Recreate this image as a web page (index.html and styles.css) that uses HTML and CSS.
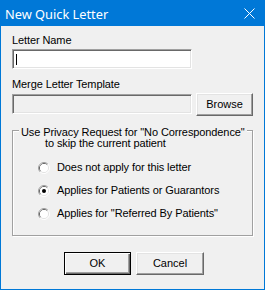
FILE: index.html
```html
<!DOCTYPE html>
<html>
<head>
<meta charset="utf-8">
<link rel="stylesheet" href="styles.css">
</head>
<body>
<div class="window">
  <div class="titlebar">
    <span class="title">New Quick Letter</span>
    <svg class="close" width="11" height="11" viewBox="0 0 11 11"><path d="M0.5 0.5 L10.5 10.5 M10.5 0.5 L0.5 10.5" stroke="#fff" stroke-width="1" fill="none"/></svg>
  </div>
  <div class="client">
    <label class="lbl">Letter Name</label>
    <div class="edit edit-name"><span class="caret"></span></div>
    <label class="lbl lbl-merge">Merge Letter Template</label>
    <div class="row">
      <div class="edit edit-disabled"></div>
      <button class="btn btn-browse">Browse</button>
    </div>
    <div class="group">
      <span class="caption">Use Privacy Request for "No Correspondence"</span>
      <div class="sub">to skip the current patient</div>
      <div class="radios">
        <div class="radio">
          <svg class="rb" width="12" height="12" viewBox="0 0 12 12"><path d="M2.11 9.89 A5.5 5.5 0 0 1 9.89 2.11" stroke="#a0a0a0" fill="none"/><path d="M9.89 2.11 A5.5 5.5 0 0 1 2.11 9.89" stroke="#fff" fill="none"/><path d="M2.82 9.18 A4.5 4.5 0 0 1 9.18 2.82" stroke="#696969" fill="none"/><path d="M9.18 2.82 A4.5 4.5 0 0 1 2.82 9.18" stroke="#e3e3e3" fill="none"/><circle cx="6" cy="6" r="4" fill="#fff"/></svg>
          <span>Does not apply for this letter</span>
        </div>
        <div class="radio">
          <svg class="rb" width="12" height="12" viewBox="0 0 12 12"><path d="M2.11 9.89 A5.5 5.5 0 0 1 9.89 2.11" stroke="#a0a0a0" fill="none"/><path d="M9.89 2.11 A5.5 5.5 0 0 1 2.11 9.89" stroke="#fff" fill="none"/><path d="M2.82 9.18 A4.5 4.5 0 0 1 9.18 2.82" stroke="#696969" fill="none"/><path d="M9.18 2.82 A4.5 4.5 0 0 1 2.82 9.18" stroke="#e3e3e3" fill="none"/><circle cx="6" cy="6" r="4" fill="#fff"/><circle cx="6" cy="6" r="2" fill="#000"/></svg>
          <span>Applies for Patients or Guarantors</span>
        </div>
        <div class="radio">
          <svg class="rb" width="12" height="12" viewBox="0 0 12 12"><path d="M2.11 9.89 A5.5 5.5 0 0 1 9.89 2.11" stroke="#a0a0a0" fill="none"/><path d="M9.89 2.11 A5.5 5.5 0 0 1 2.11 9.89" stroke="#fff" fill="none"/><path d="M2.82 9.18 A4.5 4.5 0 0 1 9.18 2.82" stroke="#696969" fill="none"/><path d="M9.18 2.82 A4.5 4.5 0 0 1 2.82 9.18" stroke="#e3e3e3" fill="none"/><circle cx="6" cy="6" r="4" fill="#fff"/></svg>
          <span>Applies for "Referred By Patients"</span>
        </div>
      </div>
    </div>
    <div class="actions">
      <button class="btn btn-default btn-ok">OK</button>
      <button class="btn btn-cancel">Cancel</button>
    </div>
  </div>
</div>
</body>
</html>
```
FILE: styles.css
```css
* { box-sizing: border-box; }
html, body { margin: 0; padding: 0; }
body {
  width: 265px;
  height: 290px;
  overflow: hidden;
  font: 11px/13px "Liberation Sans", Arial, sans-serif;
  letter-spacing: -0.1px;
  color: #000;
}
.window {
  width: 265px;
  height: 290px;
  background: #f0f0f0;
  border: 1px solid #0078d7;
  border-top: 0;
}
.titlebar {
  height: 26px;
  background: #0078d7;
  color: #fff;
  display: flex;
  align-items: center;
  justify-content: space-between;
  padding: 0 9px 0 4px;
  font: 12.8px/16px "Segoe UI", "Noto Sans", sans-serif;
  letter-spacing: 0;
}
.title { padding-top: 1px; }
.close { display: block; margin-top: 1px; }
.client { padding: 8px 0 0 11px; }
.lbl { display: block; height: 13px; }
.lbl-merge { margin-top: 9px; }
.edit {
  width: 180px;
  height: 20px;
  background: #fff;
  border: 1px solid;
  border-color: #a0a0a0 #fff #fff #a0a0a0;
  box-shadow: inset 1px 1px #696969, inset -1px -1px #e3e3e3;
}
.edit-name { margin-top: 2px; padding: 4px 0 0 3px; }
.caret { display: block; width: 1px; height: 11px; background: #000; }
.row { display: flex; align-items: flex-start; gap: 4px; margin-top: 2px; }
.edit-disabled { background: #f0f0f0; margin-top: 1px; }
.btn {
  height: 23px;
  padding: 0;
  margin: 0;
  font: inherit;
  color: #000;
  background: #f0f0f0;
  border: 1px solid;
  border-color: #fff #696969 #696969 #fff;
  box-shadow: inset -1px -1px #a0a0a0, inset 1px 1px #e3e3e3;
}
.btn-browse { width: 57px; }
.group {
  position: relative;
  margin-top: 14px;
  width: 241px;
  height: 106px;
  border: 1px solid #a0a0a0;
  box-shadow: inset 1px 1px #fff, 1px 1px #fff;
  padding-top: 7px;
}
.caption {
  position: absolute;
  top: -5px;
  left: 6px;
  padding: 0 2px;
  background: #f0f0f0;
  white-space: nowrap;
}
.sub { line-height: 11px; padding-left: 32px; }
.radios { margin-top: 7px; }
.radio {
  display: flex;
  align-items: center;
  gap: 7px;
  height: 23px;
  padding-left: 25px;
}
.rb { display: block; flex: none; }
.actions { display: flex; gap: 5px; margin-top: 16px; padding-left: 52px; }
.btn-ok { width: 67px; }
.btn-cancel { width: 68px; }
.btn-default {
  border: 1px solid #000;
  box-shadow: inset 1px 1px #fff, inset -1px -1px #696969, inset -2px -2px #a0a0a0;
}
```
